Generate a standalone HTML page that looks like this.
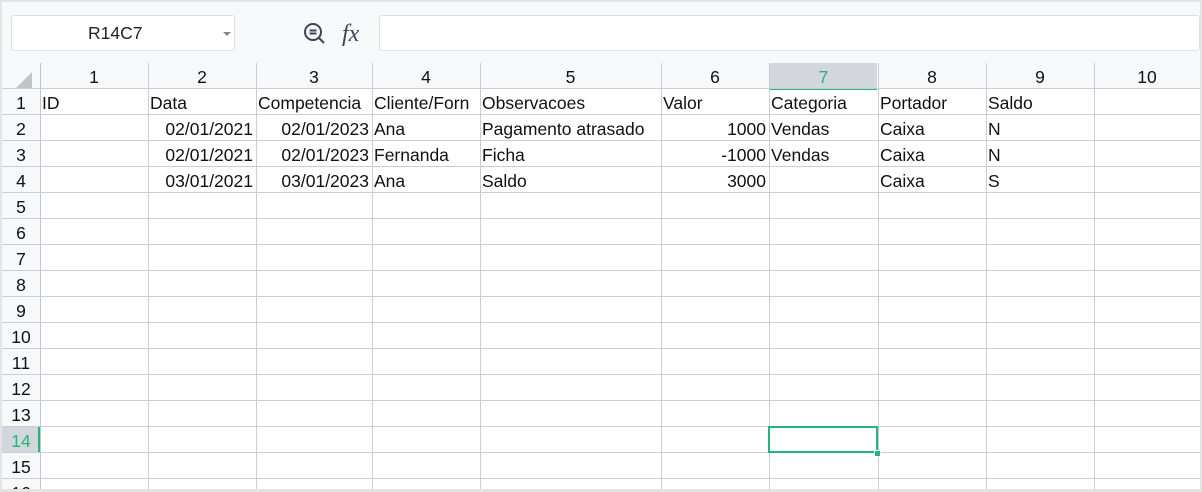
<!DOCTYPE html><html><head><style>
html,body{margin:0;width:1202px;height:492px;overflow:hidden}
body{background:#e3e3e3;font-family:"Liberation Sans",sans-serif;position:relative}
#w{position:absolute;left:2px;top:2px;width:1198px;height:487px;background:#f7f8fa;overflow:hidden}
.a{position:absolute}
.t{position:absolute;font-size:17.5px;color:#111;line-height:26px;white-space:nowrap}
</style></head><body><div id="w">
<div class="a" style="left:9px;top:13px;width:222px;height:34px;background:#fff;border:1px solid #dcdfe4;border-radius:3px"></div>
<div class="t" style="left:86px;top:18px;color:#222">R14C7</div>
<div class="a" style="left:221px;top:30px;border-left:4px solid transparent;border-right:4px solid transparent;border-top:4px solid #888"></div>
<svg class="a" style="left:298px;top:19px" width="30" height="26" viewBox="0 0 30 26"><circle cx="13" cy="11" r="8" fill="none" stroke="#3b4556" stroke-width="2"/><path d="M9.5 9.5h7M9.5 12.5h7M19 17l5 5" stroke="#3b4556" stroke-width="2" fill="none"/></svg>
<div class="t" style="left:340px;top:19px;font-family:'Liberation Serif',serif;font-style:italic;font-size:24px;color:#3b4556">fx</div>
<div class="a" style="left:377px;top:13px;width:819px;height:34px;background:#fff;border:1px solid #dcdfe4;border-radius:3px"></div>
<div class="a" style="left:38px;top:87px;width:1160px;height:400px;background:#fff"></div>
<div class="a" style="left:767px;top:61px;width:108px;height:25px;background:#d3d6dc;border-bottom:2px solid #21b77a"></div>
<div class="a" style="left:0;top:425px;width:38px;height:26px;background:#d3d6dc;border-right:2px solid #21b77a;box-sizing:border-box"></div>
<div class="a" style="left:14px;top:70px;width:0;height:0;border-left:16px solid transparent;border-bottom:16px solid #c0c3c8"></div>
<div id="g"></div>
<div class="a" style="left:766px;top:424px;width:110px;height:27px;border:2px solid #21b77a;box-sizing:border-box"></div>
<div class="a" style="left:872px;top:448px;width:5px;height:5px;background:#21b77a;border:1px solid #fff"></div>
</div>
<script>
var g=document.getElementById('g'),h='';
var cx=[38,146,254,370,478,659,767,876,984,1092,1198];
for(var i=0;i<cx.length;i++){h+='<div class="a" style="left:'+cx[i]+'px;top:61px;width:1px;height:426px;background:'+(i==0?'#bfc5d2':'#c8cdd8')+'"></div>';
if(i<10)h+='<div class="t" style="left:'+cx[i]+'px;top:62px;width:'+(cx[i+1]-cx[i])+'px;text-align:center;color:'+(i==6?'#21b77a':'#111')+'">'+(i+1)+'</div>';}
for(var r=0;r<16;r++){var y=86+r*26;h+='<div class="a" style="left:0;top:'+y+'px;width:1198px;height:1px;background:#c8cdd8"></div>';
h+='<div class="t" style="left:0;top:'+(y+2)+'px;width:38px;text-align:center;color:'+(r==13?'#21b77a':'#111')+'">'+(r+1)+'</div>';}
var d=[["ID","Data","Competencia","Cliente/Forn","Observacoes","Valor","Categoria","Portador","Saldo"],
["","02/01/2021","02/01/2023","Ana","Pagamento atrasado","1000","Vendas","Caixa","N"],
["","02/01/2021","02/01/2023","Fernanda","Ficha","-1000","Vendas","Caixa","N"],
["","03/01/2021","03/01/2023","Ana","Saldo","3000","","Caixa","S"]];
for(var r=0;r<4;r++)for(var c=0;c<9;c++){var v=d[r][c];if(!v)continue;var right=r>0&&(c==1||c==2||c==5);
h+='<div class="t" style="left:'+(cx[c]+2)+'px;top:'+(88+r*26)+'px;width:'+(cx[c+1]-cx[c]-5)+'px;overflow:hidden;text-align:'+(right?'right':'left')+'">'+v+'</div>';}
g.innerHTML=h;
</script></body></html>
